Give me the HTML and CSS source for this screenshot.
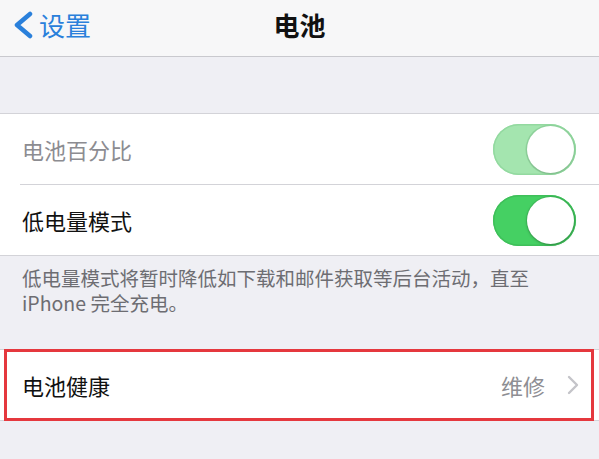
FILE: index.html
```html
<!DOCTYPE html>
<html lang="zh-CN">
<head>
  <meta charset="UTF-8">
  <meta name="viewport" content="width=device-width,initial-scale=1.0">
  <title>电池</title>
  <link rel="stylesheet" href="styles.css">
</head>
<body>
  <header class="nav">
    <a class="back" href="#">
      <svg class="back-icon" width="22" height="28" viewBox="0 0 22 28"><polyline points="18,3 5,14 18,25" fill="none" stroke="currentColor" stroke-width="4.5" stroke-linecap="round" stroke-linejoin="round"/></svg>
      <span>设置</span>
    </a>
    <h1>电池</h1>
    <div></div>
  </header>

  <section class="group first">
    <div class="row">
      <span class="label muted">电池百分比</span>
      <span class="switch on dim"><span class="knob"></span></span>
    </div>
    <div class="row">
      <span class="label">低电量模式</span>
      <span class="switch on"><span class="knob"></span></span>
    </div>
  </section>
  <p class="note">低电量模式将暂时降低如下载和邮件获取等后台活动，直至 iPhone 完全充电。</p>

  <section class="group marked">
    <div class="row">
      <span class="label">电池健康</span>
      <span class="detail">维修
        <svg class="chev" width="12" height="20" viewBox="0 0 12 20"><polyline points="2,2 10,10 2,18" fill="none" stroke="currentColor" stroke-width="2.4" stroke-linecap="round" stroke-linejoin="round"/></svg>
      </span>
    </div>
    <div class="highlight"></div>
  </section>
</body>
</html>
```

FILE: styles.css
```css
:root {
  --bg: #efeff4;
  --line: #d3d3d8;
  --blue: #2a80db;
  --green: #45d063;
  --red: #e5383e;
  --font: "Noto Sans CJK SC", "Noto Sans", sans-serif;
}
html, body {
  margin: 0; padding: 0;
  background: var(--bg);
  font-family: var(--font);
  color: #111;
}
.nav {
  height: 56px;
  background: #f7f7f8;
  border-bottom: 1px solid #c9c9ce;
  display: grid;
  grid-template-columns: 1fr auto 1fr;
  align-items: center;
}
.nav h1 {
  margin: 0 0 6px 0;
  font-size: 26px;
  font-weight: 700;
  line-height: 1;
}
.back {
  display: flex;
  align-items: center;
  gap: 5px;
  padding-left: 12px;
  margin-bottom: 6px;
  color: var(--blue);
  text-decoration: none;
  font-size: 26px;
  line-height: 1;
}
.back-icon { display: block; }
.group {
  background: #fff;
  border-top: 1px solid var(--line);
  border-bottom: 1px solid var(--line);
  position: relative;
}
.group.first { margin-top: 56px; }
.group.marked { margin-top: 34px; }
.row {
  height: 70px;
  display: flex;
  align-items: center;
  justify-content: space-between;
  padding: 0 23px 0 22px;
}
.row + .row { border-top: 1px solid var(--line); margin-left: 20px; padding-left: 2px; }
.label { font-size: 22px; }
.label.muted { color: #8c8c91; }
.switch {
  width: 83px; height: 51px;
  border-radius: 26px;
  background: var(--green);
  box-shadow: inset 0 0 0 1.5px #3fbf5a;
  position: relative;
  flex-shrink: 0;
}
.switch.dim { background: #a4e5af; box-shadow: inset 0 0 0 1.5px #93d9a0; }
.knob {
  position: absolute;
  right: 2px; top: 2px;
  width: 47px; height: 47px;
  border-radius: 50%;
  background: #fff;
  box-shadow: 0 1px 3px #0004, 0 0 0 1px #0001;
}
.switch.dim .knob { box-shadow: 0 1px 2px #0002, 0 0 0 1.5px #8fd39c; }
.note {
  margin: 0;
  padding: 10px 40px 0 22px;
  font-size: 19.5px;
  line-height: 24.5px;
  color: #6d6d72;
}
.detail {
  display: flex;
  align-items: center;
  gap: 22px;
  font-size: 22px;
  color: #8e8e93;
  margin-right: -3px;
}
.chev { color: #c4c4c9; display: block; }
.highlight {
  position: absolute;
  top: -1px; bottom: -1px;
  left: 4px; right: 5px;
  border: 3px solid var(--red);
  pointer-events: none;
}
```
